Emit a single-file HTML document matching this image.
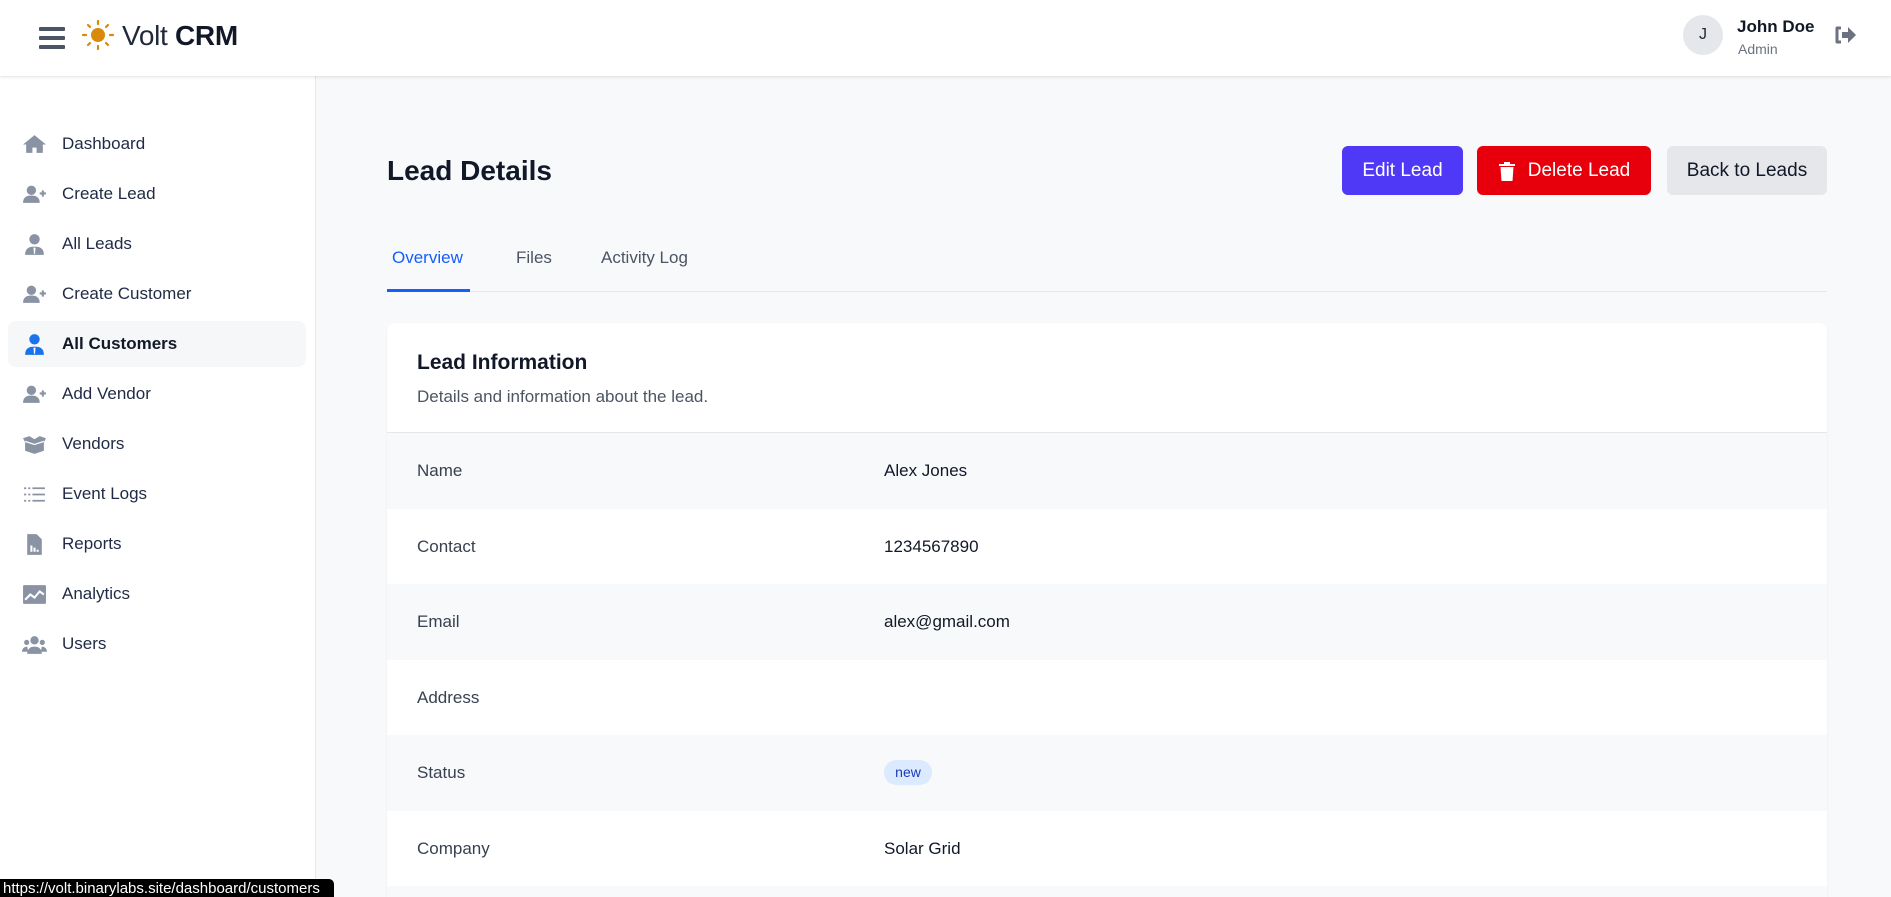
<!DOCTYPE html>
<html style="overflow:hidden;width:1891px;height:897px"><head><meta charset="utf-8"><style>
*{box-sizing:border-box;margin:0;padding:0}
body{width:1891px;height:897px;overflow:hidden;font-family:"Liberation Sans",sans-serif;background:#f8f9fb;position:relative;color:#111827}
.header{position:absolute;left:0;top:0;width:1891px;height:76px;background:#fff;box-shadow:0 1px 3px rgba(0,0,0,.12);z-index:2}
.side{position:absolute;left:0;top:76px;width:316px;height:821px;background:#fff;border-right:1px solid #e5e7eb}
.item{position:absolute;left:8px;width:298px;height:46px;border-radius:8px;display:flex;align-items:center}
.item.act{background:#f6f7f9}
.item svg{position:absolute;left:14px;width:25px;height:25px}
.item span{position:absolute;left:54px;font-size:17px;color:#1f2a44}
.item.act span{font-weight:bold;color:#111827}
.btn{position:absolute;top:146px;height:49px;border-radius:6px;font-size:19px;display:flex;align-items:center;justify-content:center}
.tab{position:absolute;top:248px;font-size:17px;color:#4b5563}
.card{position:absolute;left:387px;top:323px;width:1440px;height:574px;background:#fff;border-radius:8px 8px 0 0;box-shadow:0 1px 2px rgba(0,0,0,.06);overflow:hidden}
.row{position:absolute;left:0;width:1440px;height:75px}
.row .l{position:absolute;left:30px;top:28px;font-size:17px;color:#374151}
.row .v{position:absolute;left:497px;top:28px;font-size:17px;color:#111827}
</style></head><body>
<div class="header">
 <div style="position:absolute;left:39px;top:27px;width:26px;height:4px;background:#4b5563;border-radius:1px"></div>
 <div style="position:absolute;left:39px;top:36px;width:26px;height:4px;background:#4b5563;border-radius:1px"></div>
 <div style="position:absolute;left:39px;top:45px;width:26px;height:4px;background:#4b5563;border-radius:1px"></div>
 <svg style="position:absolute;left:81px;top:20px" width="34" height="30" viewBox="-17 -15 34 30"><circle r="7" fill="#d98a0b"/><g stroke="#d98a0b" stroke-width="2.2" stroke-linecap="round"><line x1="0" y1="-14" x2="0" y2="-11"/><line x1="0" y1="11" x2="0" y2="14"/><line x1="-15" y1="0" x2="-12" y2="0"/><line x1="12" y1="0" x2="15" y2="0"/><line x1="-10" y1="-10" x2="-8" y2="-8"/><line x1="10" y1="-10" x2="8" y2="-8"/><line x1="-10" y1="10" x2="-8" y2="8"/><line x1="10" y1="10" x2="8" y2="8"/></g></svg>
 <div style="position:absolute;left:122px;top:20px;font-size:28px;color:#1f2937;letter-spacing:-.3px"><span style="font-weight:300">Volt</span> <b style="color:#111827">CRM</b></div>
 <div style="position:absolute;left:1683px;top:15px;width:40px;height:40px;border-radius:50%;background:#e5e7eb;font-size:16px;color:#1f2937;text-align:center;line-height:40px">J</div>
 <div style="position:absolute;left:1737px;top:17px;font-size:17px;font-weight:bold;color:#111827">John Doe</div>
 <div style="position:absolute;left:1738px;top:41px;font-size:14px;color:#6b7280">Admin</div>
 <svg style="position:absolute;left:1834px;top:26px" width="22" height="18" viewBox="0 0 22 18"><path d="M7 2H3v14h4" fill="none" stroke="#6b7280" stroke-width="3" stroke-linejoin="round"/><path d="M8 6h6V1l8 8-8 8v-5H8z" fill="#6b7280"/></svg>
</div>

<div class="side">
 <div class="item" style="top:45px"><svg viewBox="0 0 24 24"><path d="M12 3L1 12h3v8h6v-5h4v5h6v-8h3z" fill="#8a93a3"/></svg><span>Dashboard</span></div>
 <div class="item" style="top:95px"><svg viewBox="0 0 24 24"><circle cx="9" cy="8" r="4.5" fill="#8a93a3"/><path d="M1 20c0-5 3-7 8-7s8 2 8 7z" fill="#8a93a3"/><path d="M20 8v6M17 11h6" stroke="#8a93a3" stroke-width="2"/></svg><span>Create Lead</span></div>
 <div class="item" style="top:145px"><svg viewBox="0 0 24 24"><circle cx="12" cy="7" r="5" fill="#8a93a3"/><path d="M3 22c0-6 3-8 9-8s9 2 9 8z" fill="#8a93a3"/><path d="M11 15h2l-.5 6h-1z" fill="#fff"/></svg><span>All Leads</span></div>
 <div class="item" style="top:195px"><svg viewBox="0 0 24 24"><circle cx="9" cy="8" r="4.5" fill="#8a93a3"/><path d="M1 20c0-5 3-7 8-7s8 2 8 7z" fill="#8a93a3"/><path d="M20 8v6M17 11h6" stroke="#8a93a3" stroke-width="2"/></svg><span>Create Customer</span></div>
 <div class="item act" style="top:245px"><svg viewBox="0 0 24 24"><circle cx="12" cy="7" r="5" fill="#1a73e8"/><path d="M3 22c0-6 3-8 9-8s9 2 9 8z" fill="#1a73e8"/><path d="M11 15h2l-.5 6h-1z" fill="#fff"/></svg><span>All Customers</span></div>
 <div class="item" style="top:295px"><svg viewBox="0 0 24 24"><circle cx="9" cy="8" r="4.5" fill="#8a93a3"/><path d="M1 20c0-5 3-7 8-7s8 2 8 7z" fill="#8a93a3"/><path d="M20 8v6M17 11h6" stroke="#8a93a3" stroke-width="2"/></svg><span>Add Vendor</span></div>
 <div class="item" style="top:345px"><svg viewBox="0 0 24 24"><path d="M1 6l6-2 5 3 5-3 6 2-2 4v8l-9 3-9-3v-8z" fill="#8a93a3"/><path d="M3 9l9 3 9-3" stroke="#fff" stroke-width="1.2" fill="none"/></svg><span>Vendors</span></div>
 <div class="item" style="top:395px"><svg viewBox="0 0 24 24"><g stroke="#8a93a3" stroke-width="1.6"><path d="M2 6h2M6 6h2M10 6h12M2 12h2M6 12h2M10 12h12M2 18h2M6 18h2M10 18h12"/></g></svg><span>Event Logs</span></div>
 <div class="item" style="top:445px"><svg viewBox="0 0 24 24"><path d="M5 2h9l5 5v15H5z" fill="#8a93a3"/><path d="M8 19v-6h2v6zM11 19v-4h2v4zM14 19v-2h2v2z" fill="#fff"/></svg><span>Reports</span></div>
 <div class="item" style="top:495px"><svg viewBox="0 0 24 24"><rect x="1" y="3" width="22" height="18" rx="1" fill="#8a93a3"/><path d="M3 17l5-5 4 3 5-6 4 3" stroke="#fff" stroke-width="2" fill="none"/></svg><span>Analytics</span></div>
 <div class="item" style="top:545px"><svg viewBox="0 0 24 24"><circle cx="12" cy="8" r="4" fill="#8a93a3"/><circle cx="4.5" cy="10" r="2.5" fill="#8a93a3"/><circle cx="19.5" cy="10" r="2.5" fill="#8a93a3"/><path d="M5 21c0-5 3-7 7-7s7 2 7 7z" fill="#8a93a3"/><path d="M0 19c0-3 2-5 5-5l1 5zM24 19c0-3-2-5-5-5l-1 5z" fill="#8a93a3"/></svg><span>Users</span></div>
</div>

<div style="position:absolute;left:387px;top:155px;font-size:28px;font-weight:bold;color:#111827">Lead Details</div>
<div class="btn" style="left:1342px;width:121px;background:#4f39f6;color:#fff">Edit Lead</div>
<div class="btn" style="left:1477px;width:174px;background:#e7000b;color:#fff"><svg width="18" height="20" viewBox="0 0 18 20" style="margin-right:12px"><path d="M1 3h16v2H1zM6 1h6v2H6zM2.5 6h13l-1 14h-11z" fill="#fff"/></svg>Delete Lead</div>
<div class="btn" style="left:1667px;width:160px;background:#e5e7eb;color:#111827">Back to Leads</div>

<div class="tab" style="left:392px;color:#155dfc">Overview</div>
<div class="tab" style="left:516px">Files</div>
<div class="tab" style="left:601px">Activity Log</div>
<div style="position:absolute;left:387px;top:291px;width:1440px;height:1px;background:#e5e7eb"></div>
<div style="position:absolute;left:387px;top:289px;width:83px;height:3px;background:#155dfc"></div>

<div class="card">
 <div style="position:absolute;left:30px;top:28px;font-size:21px;font-weight:bold;color:#111827">Lead Information</div>
 <div style="position:absolute;left:30px;top:64px;font-size:17px;color:#4b5563">Details and information about the lead.</div>
 <div style="position:absolute;left:0;top:109px;width:1440px;height:1px;background:#e5e7eb"></div>
 <div class="row" style="top:110px;height:76px;background:#f8f9fb"><div class="l">Name</div><div class="v">Alex Jones</div></div>
 <div class="row" style="top:186px;background:#fff"><div class="l">Contact</div><div class="v">1234567890</div></div>
 <div class="row" style="top:261px;height:76px;background:#f8f9fb"><div class="l">Email</div><div class="v">alex@gmail.com</div></div>
 <div class="row" style="top:337px;background:#fff"><div class="l">Address</div></div>
 <div class="row" style="top:412px;height:76px;background:#f8f9fb"><div class="l">Status</div><div style="position:absolute;left:497px;top:25px;width:48px;height:25px;border-radius:13px;background:#dbeafe;color:#193cb8;font-size:14px;text-align:center;line-height:25px">new</div></div>
 <div class="row" style="top:488px;background:#fff"><div class="l">Company</div><div class="v">Solar Grid</div></div>
 <div class="row" style="top:563px;height:11px;background:#f8f9fb"></div>
</div>

<div style="position:absolute;left:0;top:879px;width:334px;height:18px;background:#000;border-top-right-radius:5px;color:#fff;font-size:15px;line-height:20px;padding-left:3px;white-space:nowrap;overflow:hidden">https://volt.binarylabs.site/dashboard/customers</div>
</body></html>
